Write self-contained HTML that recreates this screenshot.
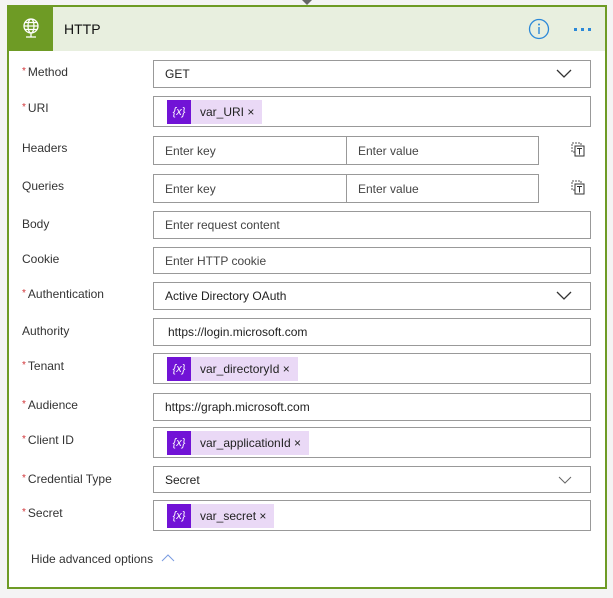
<!DOCTYPE html>
<html><head><style>
*{box-sizing:border-box;margin:0;padding:0}
body{width:613px;height:598px;background:#f4f4f4;font-family:"Liberation Sans",sans-serif;font-size:12px;color:#222;position:relative;overflow:hidden}
.card{position:absolute;left:7px;top:5px;width:600px;height:584px;border:2px solid #6e9b25;background:#fff}
.hdr{position:absolute;left:0;top:0;width:596px;height:44px;background:#e8efdf}
.ico{position:absolute;left:0;top:0;width:44px;height:44px;background:#6e9b25}
.title{position:absolute;left:55px;top:14px;font-size:14px;color:#111}
.lab{position:absolute;left:13px;font-size:12px;color:#333}
.lab b{color:#d13438;font-weight:normal;font-size:10px;position:relative;top:-2px;margin-right:2px}
.in{position:absolute;border:1px solid #999;background:#fff;font-size:12px;padding-left:11px;display:flex;align-items:center;color:#222}
.ph{color:#444}
.tok{display:flex;align-items:center;height:24px;background:#ead9f6;margin-left:1px}
.tok i{display:flex;align-items:center;justify-content:center;width:24px;height:24px;background:#7113d6;color:#fff;font-style:italic;font-size:11px}
.tok span{padding:0 8px 0 9px}
.chev{position:absolute;right:18px;top:8px}
.dot{position:absolute;top:28px;width:3px;height:3px;background:#2b88d8}
</style></head><body>
<svg style="position:absolute;left:302px;top:0" width="10" height="5"><path d="M0 0H10L5 5Z" fill="#666"/></svg>
<div class="card">
<div class="hdr">
<div class="ico"><svg width="44" height="44" viewBox="0 0 44 44" fill="none" stroke="#fff" stroke-width="1.3"><circle cx="22" cy="19" r="7"/><ellipse cx="22" cy="19" rx="3" ry="7"/><path d="M15 19h14M16 15.5h12M16 22.5h12M22 26v4M17 30h10"/></svg></div>
<div class="title">HTTP</div>
<svg style="position:absolute;left:519px;top:11px" width="22" height="22"><circle cx="11" cy="11" r="9.5" fill="none" stroke="#2b88d8" stroke-width="1.3"/><rect x="10.3" y="9" width="1.4" height="7" fill="#2b88d8"/><circle cx="11" cy="6.5" r="1" fill="#2b88d8"/></svg>
</div>
</div>
<div class="dot" style="left:574px"></div><div class="dot" style="left:581px"></div><div class="dot" style="left:588px"></div>
<div class="lab" style="left:22px;top:65px"><b>*</b>Method</div>
<div class="in" style="left:153px;top:60px;width:438px;height:28px">GET<svg class="chev" width="16" height="10"><path d="M1 1l7 7 7-7" fill="none" stroke="#333" stroke-width="1.3"/></svg></div>
<div class="lab" style="left:22px;top:101px"><b>*</b>URI</div>
<div class="in" style="left:153px;top:96px;width:438px;height:31px;padding-left:12px"><div class="tok"><i>{x}</i><span>var_URI &#215;</span></div></div>
<div class="lab" style="left:22px;top:141px">Headers</div>
<div class="in ph" style="left:153px;top:136px;width:194px;height:29px">Enter key</div>
<div class="in ph" style="left:346px;top:136px;width:193px;height:29px">Enter value</div>
<div class="lab" style="left:22px;top:179px">Queries</div>
<div class="in ph" style="left:153px;top:174px;width:194px;height:29px">Enter key</div>
<div class="in ph" style="left:346px;top:174px;width:193px;height:29px">Enter value</div>
<svg style="position:absolute;left:571px;top:142px" width="15" height="15"><rect x="1" y="1" width="9" height="9" fill="none" stroke="#555" stroke-dasharray="2 1"/><rect x="4" y="4" width="9" height="10" fill="#fff" stroke="#333"/><path d="M6 6.5h5M8.5 6.5v6" stroke="#333"/></svg>
<svg style="position:absolute;left:571px;top:180px" width="15" height="15"><rect x="1" y="1" width="9" height="9" fill="none" stroke="#555" stroke-dasharray="2 1"/><rect x="4" y="4" width="9" height="10" fill="#fff" stroke="#333"/><path d="M6 6.5h5M8.5 6.5v6" stroke="#333"/></svg>
<div class="lab" style="left:22px;top:217px">Body</div>
<div class="in ph" style="left:153px;top:211px;width:438px;height:28px">Enter request content</div>
<div class="lab" style="left:22px;top:252px">Cookie</div>
<div class="in ph" style="left:153px;top:247px;width:438px;height:27px">Enter HTTP cookie</div>
<div class="lab" style="left:22px;top:287px"><b>*</b>Authentication</div>
<div class="in" style="left:153px;top:282px;width:438px;height:28px">Active Directory OAuth<svg class="chev" width="16" height="10"><path d="M1 1l7 7 7-7" fill="none" stroke="#333" stroke-width="1.3"/></svg></div>
<div class="lab" style="left:22px;top:324px">Authority</div>
<div class="in" style="left:153px;top:318px;width:438px;height:28px;padding-left:14px">https://login.microsoft.com</div>
<div class="lab" style="left:22px;top:359px"><b>*</b>Tenant</div>
<div class="in" style="left:153px;top:353px;width:438px;height:31px;padding-left:12px"><div class="tok"><i>{x}</i><span>var_directoryId &#215;</span></div></div>
<div class="lab" style="left:22px;top:398px"><b>*</b>Audience</div>
<div class="in" style="left:153px;top:393px;width:438px;height:28px">https://graph.microsoft.com</div>
<div class="lab" style="left:22px;top:433px"><b>*</b>Client ID</div>
<div class="in" style="left:153px;top:427px;width:438px;height:31px;padding-left:12px"><div class="tok"><i>{x}</i><span>var_applicationId &#215;</span></div></div>
<div class="lab" style="left:22px;top:472px"><b>*</b>Credential Type</div>
<div class="in" style="left:153px;top:466px;width:438px;height:27px">Secret<svg class="chev" style="top:9px" width="14" height="8"><path d="M1 1l6 6 6-6" fill="none" stroke="#666" stroke-width="1"/></svg></div>
<div class="lab" style="left:22px;top:506px"><b>*</b>Secret</div>
<div class="in" style="left:153px;top:500px;width:438px;height:31px;padding-left:12px"><div class="tok"><i>{x}</i><span>var_secret &#215;</span></div></div>
<div style="position:absolute;left:31px;top:552px;font-size:12px;color:#333">Hide advanced options</div>
<svg style="position:absolute;left:161px;top:554px" width="14" height="8"><path d="M1 7l6-6 6 6" fill="none" stroke="#7a9be0" stroke-width="1"/></svg>
</body></html>
